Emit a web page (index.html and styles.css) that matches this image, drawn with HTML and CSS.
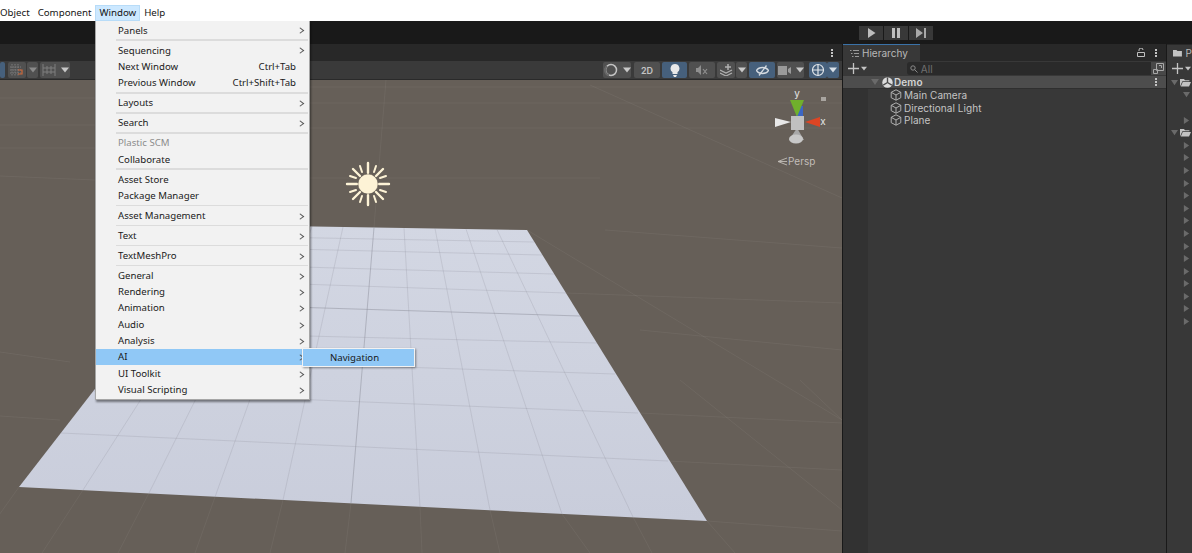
FILE: index.html
```html
<!DOCTYPE html>
<html lang="en">
<head>
<meta charset="utf-8">
<title>Unity Editor</title>
<link rel="stylesheet" href="styles.css">
</head>
<body>
<svg class="defs" width="0" height="0" aria-hidden="true">
  <symbol id="cube" viewBox="0 0 12 12"><path d="M6 .8 10.800 3.300V8.700L6 11.200 1.200 8.700V3.300ZM1.200 3.300 6 6 10.800 3.300M6 6V11.200" fill="none" stroke="currentColor" stroke-width="1"/></symbol>
  <symbol id="right" viewBox="0 0 8 8"><path d="M1 0 7 4 1 8Z" fill="#6a6a6a"/></symbol>
  <symbol id="down" viewBox="0 0 8 8"><path d="M0 1H8L4 7Z" fill="#6a6a6a"/></symbol>
  <symbol id="caret" viewBox="0 0 8 6"><path d="M0 .5H8L4 5.500Z" fill="currentColor"/></symbol>
  <symbol id="folder" viewBox="0 0 14 11"><path d="M0 1H5L6.500 2.500H13V10.500H0Z" fill="#c2c2c2"/></symbol>
  <symbol id="openfolder" viewBox="0 0 14 11"><path d="M0 1H5L6.500 2.500H12V4H3L0 10.500Z M3.500 5H14L11.500 10.500H1Z" fill="#c2c2c2"/></symbol>
  <symbol id="plus" viewBox="0 0 11 11"><path d="M5.500 0V11M0 5.500H11" stroke="currentColor" stroke-width="1.300"/></symbol>
</svg>

<header class="menubar">
  <span class="mitem">Object</span>
  <span class="mitem">Component</span>
  <span class="mitem active">Window</span>
  <span class="mitem">Help</span>
</header>

<div class="playbar">
  <div class="playgroup">
    <button class="pbtn"><svg width="9" height="10" viewBox="0 0 9 10"><path d="M1 0 8.500 5 1 10Z" fill="#bdbdbd"/></svg></button>
    <button class="pbtn"><svg width="8" height="10" viewBox="0 0 8 10"><path d="M0 0H3V10H0ZM5 0H8V10H5Z" fill="#bdbdbd"/></svg></button>
    <button class="pbtn"><svg width="10" height="10" viewBox="0 0 10 10"><path d="M0 0 7 5 0 10ZM8 0H10V10H8Z" fill="#a8a8a8"/></svg></button>
  </div>
</div>

<main class="workspace">
  <section class="scene-pane">
    <div class="scene-tabs"><span class="kebab"><i></i><i></i><i></i></span></div>
    <div class="scene-toolbar">
      <div class="tgroup">
        <span class="chip blue w5"></span>
        <span class="chip w18 ml3"><svg width="14" height="12" viewBox="0 0 14 12"><path d="M2 0V12M5 0V12M8 0V12M0 3H11M0 6H11M0 9H11" stroke="#7d7d7d" stroke-dasharray="1.500 1"/><path d="M8 6H12V10H8" fill="none" stroke="#d0693a" stroke-width="1.200"/></svg></span>
        <span class="chip w11 ml1 caret dim"><svg width="8" height="6"><use href="#caret"/></svg></span>
        <span class="chip w30 ml2 gap4"><svg width="14" height="12" viewBox="0 0 14 12"><path d="M1 0V12M13 0V12M1 4H13M1 8H13M5 2V10M9 2V10" stroke="#7f7f7f" fill="none"/></svg><svg class="caret" width="8" height="6"><use href="#caret"/></svg></span>
      </div>
      <div class="tgroup">
        <span class="chip w28 gap4"><svg width="14" height="14" viewBox="0 0 14 14"><circle cx="7" cy="7" r="5.500" fill="none" stroke="#c4c4c4" stroke-width="1.500"/><path d="M3 3A5.500 5.500 0 0 0 5 12.500" fill="none" stroke="#666" stroke-width="2"/></svg><svg class="caret" width="8" height="6"><use href="#caret"/></svg></span>
        <span class="chip w26 ml3 label">2D</span>
        <span class="chip w25 ml2 blue"><svg width="10" height="13" viewBox="0 0 10 13"><path d="M5 0A4.500 4.500 0 0 1 7.500 8.200V10H2.500V8.200A4.500 4.500 0 0 1 5 0ZM3 11H7L6 13H4Z" fill="#e8e8e8"/></svg></span>
        <span class="chip w26 ml2"><svg width="12" height="10" viewBox="0 0 12 10"><path d="M0 3H2L5 0V10L2 7H0Z" fill="#8f8f8f"/><path d="M7 4 11 9M11 4 7 9" stroke="#8f8f8f" stroke-width="1.200"/></svg></span>
        <span class="chip w18 ml2"><svg width="13" height="12" viewBox="0 0 13 12"><path d="M0 6 6 9 12 6M0 9 6 12 12 9" fill="none" stroke="#b0b0b0" stroke-width="1.200"/><path d="M8 0V6M5 3H11" stroke="#b0b0b0" stroke-width="1.500"/></svg></span>
        <span class="chip w11 ml1 caret"><svg width="8" height="6"><use href="#caret"/></svg></span>
        <span class="chip w26 ml2 blue"><svg width="13" height="11" viewBox="0 0 13 11"><path d="M.5 5.500C3 1.500 10 1.500 12.500 5.500C10 9.500 3 9.500 .5 5.500Z" fill="none" stroke="#d4dae0" stroke-width="1.300"/><path d="M3 10.500 10.500 .5" stroke="#d4dae0" stroke-width="1.300"/></svg></span>
        <span class="chip w27 ml2 gap4"><svg width="13" height="9" viewBox="0 0 13 9"><path d="M0 0H9V9H0ZM10 3 13 1V8L10 6Z" fill="#9a9a9a"/></svg><svg class="caret" width="8" height="6"><use href="#caret"/></svg></span>
        <span class="chip w18 ml5 blue"><svg width="14" height="14" viewBox="0 0 14 14"><g fill="none" stroke="#e2e6ea" stroke-width="1.200"><circle cx="7" cy="7" r="5.500"/><path d="M1.500 7H12.500M7 1.500V12.500"/></g></svg></span>
        <span class="chip w12 blue caret-light"><svg width="8" height="6"><use href="#caret"/></svg></span>
        <span class="toolbar-end"></span>
      </div>
    </div>

    <div class="viewport">
      <svg class="world" viewBox="0 80 842 473" width="842" height="473">
        <defs>
          <linearGradient id="planeFill" x1="0" y1="225" x2="0" y2="521" gradientUnits="userSpaceOnUse">
            <stop offset="0" stop-color="#d3d7e3"/>
            <stop offset="1" stop-color="#c9cddb"/>
          </linearGradient>
        </defs>
        <path class="ground" d="M0 98H95M0 125H95M0 148H95M0 176 95 180M310 128H842M310 178H600M310 103H842M310 87H842M590 85 842 198M386 80 374 227M0 352 70 362M0 416 60 420M19 487-28 553M83 490 42 553M149 493 118 553M215 497 195 553M283 500 270 553M351 503 345 553M420 507 422 553M490 510 500 553M562 514 590 553M633 517 652 553M707 521 735 553M640 413 842 423M668 461 842 470M707 521 842 531M680 380 842 510M800 380 842 420M640 330 842 350M527 230 842 420M566 293 842 303M605 230 842 248"/>
        <polygon class="plane" fill="url(#planeFill)" points="222,225 527,230 707,521 19,487"/>
        <path class="pgrid" d="M252 225.500 83 490M282 226 149 493M312 226.500 215 497M343 227 283 500M404 228 420 507M435 228.500 490 510M466 229 562 514M497 229.500 633 517M214 236 534 242M205 247 542 255M192 264 554 274M180 280 566 293M139 332 597 343M121 358 615 374M93 391 638 413M61 433 668 461"/>
        <path class="pgrid bold" d="M374 227.500 351 503M162 303 580 316"/>

        <g class="sun">
          <path class="rays-long" d="M368 163V173M368 195V205M347 184H357M379 184H389M353 169 360 176M383 169 376 176M353 199 360 192M383 199 376 192"/>
          <path class="rays-short" d="M360 166 362 172M376 166 374 172M350 176 356 178M386 176 380 178M350 192 356 190M386 192 380 190M360 202 362 196M376 202 374 196"/>
          <circle cx="368" cy="184" r="10"/>
        </g>

        <g class="gizmo">
          <path fill="#3b66c4" d="M796 106H803V118H796Z"/>
          <path fill="#70b02c" d="M790 100H804L797 117Z"/>
          <path fill="#e8e8e8" d="M775 118 791 122 775 127Z"/>
          <path fill="#dd4524" d="M820 117V127L805 122Z"/>
          <path fill="#a8a8a8" d="M797 128 804 140H789Z"/>
          <ellipse fill="#c8c8c8" cx="796" cy="139" rx="7" ry="4.500"/>
          <rect fill="#c0c0c0" x="791" y="116" width="13" height="14"/>
          <rect fill="#a9a5a0" x="821" y="97" width="5" height="4"/>
          <text x="797" y="97" class="axis">y</text>
          <text x="823" y="125" class="axis">x</text>
          <path class="perspmark" d="M787 158 778 161.500 787 165M787 161.500H778"/>
          <text x="788" y="165" class="persp">Persp</text>
        </g>
      </svg>
    </div>
  </section>

  <section class="hierarchy">
    <div class="panel-tabs">
      <div class="tab"><svg width="9" height="7" viewBox="0 0 9 7"><path d="M0 .5H1.500M3 .5H9M1 3.500H2.500M4 3.500H9M2 6.500H3.500M5 6.500H9" stroke="#9a9a9a"/></svg><span>Hierarchy</span></div>
      <div class="tab-actions">
        <svg width="8" height="9" viewBox="0 0 8 9"><path d="M2 3V2A2 2 0 0 1 6 2M.5 4.500H7.500V8.500H.5Z" fill="none" stroke="#c0c0c0"/></svg>
        <span class="kebab"><i></i><i></i><i></i></span>
      </div>
    </div>
    <div class="search-row">
      <div class="addbtn"><svg width="11" height="11"><use href="#plus"/></svg><svg width="6" height="5"><use href="#caret"/></svg></div>
      <div class="searchbox"><svg width="8" height="8" viewBox="0 0 8 8"><circle cx="3" cy="3" r="2.200" fill="none" stroke="#8a8a8a"/><path d="M4.500 4.500 7.500 7.500" stroke="#8a8a8a"/></svg><span>All</span></div>
      <div class="searchpick"><svg width="11" height="11" viewBox="0 0 11 11"><path d="M3.500 .5H10.500V7.500H3.500ZM.5 6.500H4.500V10.500H.5ZM6 2.500H8.500V5" fill="none" stroke="#a8a8a8"/></svg></div>
    </div>
    <div class="tree">
      <div class="scene-row">
        <svg class="tri" width="8" height="8"><use href="#down"/></svg>
        <svg class="unity" width="11" height="11" viewBox="0 0 12 12"><circle cx="6" cy="6" r="5.700" fill="#dcdcdc"/><path d="M6 6 6 .5M6 6 1.300 8.800M6 6 10.700 8.800" stroke="#4d4d4d" stroke-width="1.500"/></svg>
        <b>Demo</b>
        <span class="kebab"><i></i><i></i><i></i></span>
      </div>
      <div class="node"><svg width="12" height="12"><use href="#cube"/></svg><span>Main Camera</span></div>
      <div class="node"><svg width="12" height="12"><use href="#cube"/></svg><span>Directional Light</span></div>
      <div class="node"><svg width="12" height="12"><use href="#cube"/></svg><span>Plane</span></div>
    </div>
  </section>

  <section class="project">
    <div class="panel-tabs"><div class="tab ptab"><svg width="10" height="8"><use href="#folder"/></svg><span>P</span></div></div>
    <div class="search-row psearch"><div class="addbtn"><svg width="11" height="11"><use href="#plus"/></svg><svg width="6" height="5"><use href="#caret"/></svg></div></div>
    <div class="ptree">
      <div class="prow l0"><svg width="7" height="7"><use href="#down"/></svg><svg width="11" height="9"><use href="#openfolder"/></svg></div>
      <div class="prow l1"><svg width="7" height="7"><use href="#down"/></svg></div>
      <div class="prow"></div>
      <div class="prow l1"><svg width="7" height="7"><use href="#right"/></svg></div>
      <div class="prow l0"><svg width="7" height="7"><use href="#down"/></svg><svg width="11" height="9"><use href="#openfolder"/></svg></div>
      <div class="prow l1"><svg width="7" height="7"><use href="#right"/></svg></div>
      <div class="prow l1"><svg width="7" height="7"><use href="#right"/></svg></div>
      <div class="prow l1"><svg width="7" height="7"><use href="#right"/></svg></div>
      <div class="prow l1"><svg width="7" height="7"><use href="#right"/></svg></div>
      <div class="prow l1"><svg width="7" height="7"><use href="#right"/></svg></div>
      <div class="prow l1"><svg width="7" height="7"><use href="#right"/></svg></div>
      <div class="prow l1"><svg width="7" height="7"><use href="#right"/></svg></div>
      <div class="prow l1"><svg width="7" height="7"><use href="#right"/></svg></div>
      <div class="prow l1"><svg width="7" height="7"><use href="#right"/></svg></div>
      <div class="prow l1"><svg width="7" height="7"><use href="#right"/></svg></div>
      <div class="prow l1"><svg width="7" height="7"><use href="#right"/></svg></div>
      <div class="prow l1"><svg width="7" height="7"><use href="#right"/></svg></div>
      <div class="prow l1"><svg width="7" height="7"><use href="#right"/></svg></div>
      <div class="prow l1"><svg width="7" height="7"><use href="#right"/></svg></div>
      <div class="prow l1"><svg width="7" height="7"><use href="#right"/></svg></div>
    </div>
  </section>
</main>

<nav class="menu">
  <div class="row sub">Panels</div>
  <div class="sep"></div>
  <div class="row sub">Sequencing</div>
  <div class="row">Next Window<kbd>Ctrl+Tab</kbd></div>
  <div class="row">Previous Window<kbd>Ctrl+Shift+Tab</kbd></div>
  <div class="sep"></div>
  <div class="row sub">Layouts</div>
  <div class="sep"></div>
  <div class="row sub">Search</div>
  <div class="sep"></div>
  <div class="row disabled">Plastic SCM</div>
  <div class="row">Collaborate</div>
  <div class="sep"></div>
  <div class="row">Asset Store</div>
  <div class="row">Package Manager</div>
  <div class="sep"></div>
  <div class="row sub">Asset Management</div>
  <div class="sep"></div>
  <div class="row sub">Text</div>
  <div class="sep"></div>
  <div class="row sub">TextMeshPro</div>
  <div class="sep"></div>
  <div class="row sub">General</div>
  <div class="row sub">Rendering</div>
  <div class="row sub">Animation</div>
  <div class="row sub">Audio</div>
  <div class="row sub">Analysis</div>
  <div class="row sub selected">AI</div>
  <div class="row sub">UI Toolkit</div>
  <div class="row sub">Visual Scripting</div>
</nav>
<nav class="submenu"><div class="subrow">Navigation</div></nav>
</body>
</html>
```

FILE: styles.css
```css
* { box-sizing: border-box; }
html, body { margin: 0; height: 100%; }
body {
  position: relative;
  width: 1192px;
  height: 553px;
  overflow: hidden;
  display: flex;
  flex-direction: column;
  background: #191919;
  font-family: "Noto Sans", "Liberation Sans", sans-serif;
}
.defs { position: absolute; }

/* OS menu bar */
.menubar {
  height: 21px;
  flex: none;
  display: flex;
  align-items: flex-end;
  margin-left: -4px;
  background: #fff;
  color: #141414;
  font-size: 9.7px;
}
.mitem { height: 16px; line-height: 16px; padding: 0 4px; }
.mitem.active { background: #cce8ff; box-shadow: inset 0 0 0 1px #b8dcf8; }

/* Play controls */
.playbar {
  height: 23px;
  flex: none;
  display: flex;
  padding: 5px 0 0 859px;
  background: #191919;
}
.playgroup { display: flex; gap: 1px; height: 14px; }
.pbtn {
  width: 24px;
  height: 14px;
  padding: 0;
  border: 0;
  background: #383838;
  display: flex;
  align-items: center;
  justify-content: center;
}

.workspace { flex: 1; display: flex; min-height: 0; background: #191919; }

/* Scene view */
.scene-pane { width: 842px; flex: none; display: flex; flex-direction: column; }
.scene-tabs {
  height: 17px;
  flex: none;
  display: flex;
  justify-content: flex-end;
  align-items: center;
  padding-right: 9px;
  background: #282828;
}
.kebab { display: flex; flex-direction: column; gap: 1px; width: 2px; }
.kebab i { width: 2px; height: 2px; background: #c4c4c4; }
.scene-toolbar {
  height: 19px;
  flex: none;
  display: flex;
  justify-content: space-between;
  align-items: flex-start;
  padding-top: 1px;
  background: #3a3a3a;
  border-bottom: 1px solid #2a2a2a;
}
.tgroup { display: flex; align-items: center; }
.chip {
  height: 16px;
  display: flex;
  align-items: center;
  justify-content: center;
  flex: none;
  background: #505050;
  color: #c8c8c8;
  border-radius: 2px;
}
.chip.blue { background: #46607c; }
.caret { color: #c8c8c8; }
.caret.dim { color: #8a8a8a; }
.caret-light { color: #d8e0e8; }
.label { font: 600 9px "Inter", sans-serif; color: #c4c4c4; }
.gap4 { gap: 5px; }
.w5 { width: 5px; }
.w11 { width: 11px; }
.w12 { width: 12px; }
.w18 { width: 18px; }
.w25 { width: 25px; }
.w26 { width: 26px; }
.w27 { width: 27px; }
.w28 { width: 28px; }
.w30 { width: 30px; }
.ml1 { margin-left: 1px; }
.ml2 { margin-left: 2px; }
.ml3 { margin-left: 3px; }
.ml5 { margin-left: 5px; }
.toolbar-end { width: 3px; }

.viewport { flex: 1; position: relative; overflow: hidden; background: #665f58; }
.world { position: absolute; inset: 0; display: block; }
.ground { fill: none; stroke: #fff; stroke-opacity: .05; stroke-width: 1; }
.pgrid { fill: none; stroke: #8d909c; stroke-opacity: .3; stroke-width: .8; }
.pgrid.bold { stroke-opacity: .5; stroke-width: 1; }
.sun circle { fill: #fdf3d6; stroke: #4d453c; stroke-opacity: .35; }
.rays-long, .rays-short { fill: none; stroke: #fdf3d6; stroke-linecap: round; }
.rays-long { stroke-width: 2.4; }
.rays-short { stroke-width: 2; }
.axis { font: 10px "Inter", sans-serif; fill: #e4e4e4; text-anchor: middle; }
.persp { font: 10px "Inter", sans-serif; fill: #c2bdb8; }
.perspmark { fill: none; stroke: #c2bdb8; stroke-width: .9; }

/* Hierarchy */
.hierarchy {
  width: 323px;
  flex: none;
  margin: 0 1px;
  display: flex;
  flex-direction: column;
  background: #383838;
  color: #c4c4c4;
  font-family: "Inter", sans-serif;
  font-size: 10px;
}
.panel-tabs {
  height: 17px;
  flex: none;
  display: flex;
  justify-content: space-between;
  background: #282828;
}
.tab {
  width: 77px;
  display: flex;
  align-items: center;
  gap: 3px;
  padding-left: 7px;
  background: #383838;
  border-top: 1px solid #3a72a8;
  color: #b8b8b8;
}
.tab-actions { display: flex; align-items: center; gap: 10px; padding-right: 9px; }
.search-row { height: 15px; flex: none; display: flex; align-items: center; background: #383838; }
.addbtn { display: flex; align-items: center; gap: 2px; padding-left: 5px; width: 64px; color: #c4c4c4; }
.searchbox {
  width: 245px;
  height: 13px;
  display: flex;
  align-items: center;
  gap: 3px;
  padding-left: 3px;
  background: #2a2a2a;
  border-radius: 3px 0 0 3px;
  color: #707070;
}
.searchpick {
  width: 15px;
  height: 13px;
  display: flex;
  align-items: center;
  justify-content: center;
  background: #484848;
}
.tree {
  flex: 1;
  background: linear-gradient(to right, #323232 25px, #383838 25px);
}
.scene-row {
  height: 13px;
  display: flex;
  align-items: center;
  padding-left: 28px;
  padding-right: 9px;
  background: #4d4d4d;
  border-bottom: 1px solid #2f2f2f;
}
.scene-row .tri { margin-right: 3px; }
.scene-row b { margin-left: 1px; font-weight: 600; color: #d4d4d4; flex: 1; letter-spacing: .1px; }
.node { height: 12.6px; display: flex; align-items: center; gap: 2px; padding-left: 47px; letter-spacing: .05px; }
.node svg { color: #b0b0b0; }

/* Project (runs past the window edge) */
.project {
  flex: 1;
  min-width: 0;
  display: flex;
  flex-direction: column;
  background: #383838;
  color: #c4c4c4;
  font-family: "Inter", sans-serif;
  font-size: 10px;
  overflow: hidden;
}
.ptab { width: 100%; gap: 3px; padding-left: 6px; border-top-color: #282828; }
.psearch .addbtn { padding-left: 5px; }
.ptree { flex: 1; }
.prow { height: 12.6px; display: flex; align-items: center; gap: 2px; }
.prow.l0 { padding-left: 4px; }
.prow.l1 { padding-left: 16px; }

/* Window menu overlay */
.menu {
  position: absolute;
  left: 95px;
  top: 21px;
  width: 215px;
  height: 379px;
  padding-top: 1px;
  background: #f2f2f2;
  border: 1px solid #a6a6a6;
  border-top: 0;
  box-shadow: 1px 2px 2px rgba(0, 0, 0, .45);
  font-size: 9.65px;
  color: #1a1a1a;
}
.row {
  position: relative;
  height: 16.33px;
  display: flex;
  align-items: center;
  justify-content: space-between;
  padding: 0 13px 0 22px;
  white-space: nowrap;
}
.row kbd { font: inherit; }
.row.disabled { color: #8c8c8c; }
.row.selected { background: #90c8f6; }
.sub::after {
  content: "";
  position: absolute;
  right: 7px;
  top: 6.400px;
  width: 3.500px;
  height: 3.500px;
  border-top: 1px solid #555;
  border-right: 1px solid #555;
  transform: rotate(45deg) skew(-8deg, -8deg);
}
.sep { height: 3.67px; margin: 0 1px 0 20px; display: flex; align-items: center; }
.sep::before { content: ""; flex: 1; height: 1.500px; background: #dcdcdc; }
.submenu {
  position: absolute;
  left: 302px;
  top: 348px;
  width: 113px;
  height: 19px;
  padding: 1px;
  background: #f2f2f2;
  box-shadow: 1px 1px 2px rgba(0, 0, 0, .4);
}
.subrow {
  height: 17px;
  line-height: 17px;
  padding-left: 27px;
  background: #90c8f6;
  font-size: 9.65px;
  color: #1a1a1a;
}
```
